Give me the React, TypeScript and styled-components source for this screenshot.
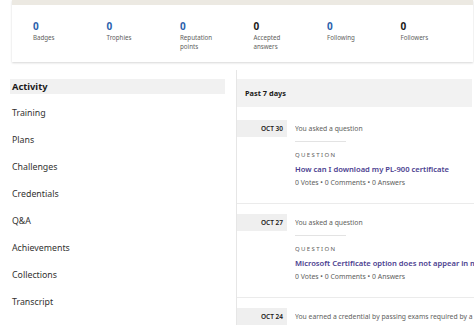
import React from "react";
import styled, { createGlobalStyle } from "styled-components";

const Global = createGlobalStyle`
  html, body { margin: 0; padding: 0; background: #fff; overflow: hidden; }
  body {
    font-family: "Noto Sans", "Open Sans", sans-serif;
    color: #323130;
    width: 474px;
    height: 325px;
  }
`;

const Page = styled.div`
  width: 474px;
  height: 325px;
  overflow: hidden;
`;

const Hero = styled.section`
  margin: 0 1px 0 12px;
  height: 62px;
  box-sizing: border-box;
  border-top: 5px solid #ece9e2;
  background: #fff;
  box-shadow: 0 1px 2px rgba(0, 0, 0, 0.16);
  padding: 15px 0 0 21px;
  display: grid;
  grid-template-columns: repeat(6, 73.5px);
  align-items: start;
`;

const Stat = styled.div`
  display: flex;
  flex-direction: column;
`;

const StatValue = styled.span<{ $link?: boolean }>`
  font-size: 10px;
  line-height: 12px;
  font-weight: 700;
  color: ${(p) => (p.$link ? "#2b62ad" : "#1b1a19")};
`;

const StatLabel = styled.span`
  margin-top: 2px;
  font-size: 6.2px;
  line-height: 8.5px;
  color: #605e5c;
  width: 38px;
`;

const Main = styled.div`
  display: flex;
  gap: 11px;
  padding: 17px 0 0 10px;
`;

const Nav = styled.nav`
  width: 215px;
  flex: none;
  display: flex;
  flex-direction: column;
  gap: 12px;
`;

const NavItem = styled.div<{ $active?: boolean }>`
  height: 15px;
  line-height: 15px;
  padding-left: 2px;
  font-size: ${(p) => (p.$active ? "9.3px" : "8.8px")};
  font-weight: ${(p) => (p.$active ? 700 : 400)};
  color: ${(p) => (p.$active ? "#1b1a19" : "#323130")};
  background: ${(p) => (p.$active ? "#f1f1f1" : "transparent")};
`;

const Panel = styled.section`
  flex: 1;
  min-width: 0;
  border-left: 1px solid #e6e6e6;
  margin-top: -9px;
  padding-top: 9px;
`;

const PanelHeader = styled.div`
  margin-right: 2px;
  height: 28px;
  display: flex;
  align-items: center;
  padding-left: 8px;
  background: #f2f2f2;
  font-size: 7.4px;
  font-weight: 700;
  color: #1b1a19;
`;

const Feed = styled.div`
  margin-top: 3px;
`;

const FeedItem = styled.article`
  display: flex;
  padding: 10px 0 13px;
  border-bottom: 1px solid #ebebeb;
`;

const DateTag = styled.div`
  flex: none;
  width: 50px;
  height: 17px;
  box-sizing: border-box;
  padding-right: 4px;
  background: #efefef;
  text-align: right;
  line-height: 17px;
  font-size: 6.5px;
  font-weight: 600;
  color: #1b1a19;
`;

const ItemBody = styled.div`
  flex: 1;
  min-width: 0;
  margin-left: 8px;
  overflow: hidden;
`;

const Action = styled.div`
  line-height: 17px;
  font-size: 6.8px;
  color: #605e5c;
  white-space: nowrap;
`;

const Divider = styled.div`
  margin-top: 4px;
  width: 51px;
  height: 1px;
  background: #e3e3e3;
`;

const Kind = styled.div`
  margin-top: 6px;
  line-height: 14px;
  font-size: 6px;
  letter-spacing: 1.4px;
  color: #605e5c;
`;

const Title = styled.div`
  line-height: 14px;
  font-size: 7.6px;
  font-weight: 600;
  color: #4b4190;
  white-space: nowrap;
`;

const Meta = styled.div`
  line-height: 14px;
  font-size: 6.9px;
  color: #605e5c;
  white-space: nowrap;
`;

const stats = [
  { value: "0", label: "Badges", link: true },
  { value: "0", label: "Trophies", link: true },
  { value: "0", label: "Reputation points", link: true },
  { value: "0", label: "Accepted answers", link: false },
  { value: "0", label: "Following", link: true },
  { value: "0", label: "Followers", link: false },
];

const navItems = [
  "Activity",
  "Training",
  "Plans",
  "Challenges",
  "Credentials",
  "Q&A",
  "Achievements",
  "Collections",
  "Transcript",
];

const feed = [
  {
    date: "OCT 30",
    action: "You asked a question",
    title: "How can I download my PL-900 certificate",
  },
  {
    date: "OCT 27",
    action: "You asked a question",
    title: "Microsoft Certificate option does not appear in my profile",
  },
  {
    date: "OCT 24",
    action: "You earned a credential by passing exams required by a certification",
  },
];

export default function App() {
  return (
    <Page>
      <Global />
      <Hero>
        {stats.map((s) => (
          <Stat key={s.label}>
            <StatValue $link={s.link}>{s.value}</StatValue>
            <StatLabel>{s.label}</StatLabel>
          </Stat>
        ))}
      </Hero>
      <Main>
        <Nav>
          {navItems.map((n, i) => (
            <NavItem key={n} $active={i === 0}>
              {n}
            </NavItem>
          ))}
        </Nav>
        <Panel>
          <PanelHeader>Past 7 days</PanelHeader>
          <Feed>
            {feed.map((f) => (
              <FeedItem key={f.date}>
                <DateTag>{f.date}</DateTag>
                <ItemBody>
                  <Action>{f.action}</Action>
                  {f.title && (
                    <>
                      <Divider />
                      <Kind>QUESTION</Kind>
                      <Title>{f.title}</Title>
                      <Meta>0 Votes • 0 Comments • 0 Answers</Meta>
                    </>
                  )}
                </ItemBody>
              </FeedItem>
            ))}
          </Feed>
        </Panel>
      </Main>
    </Page>
  );
}
